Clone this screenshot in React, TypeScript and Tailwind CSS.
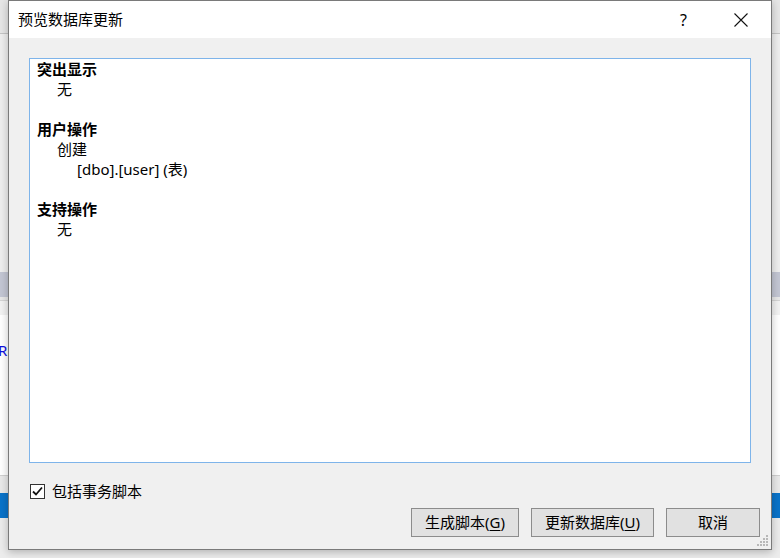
const font = {
  fontFamily: '"Noto Sans", "Noto Sans CJK SC", sans-serif',
};

function Grip() {
  const dots = [
    [9, 0],
    [6, 3],
    [9, 3],
    [3, 6],
    [6, 6],
    [9, 6],
    [0, 9],
    [3, 9],
    [6, 9],
    [9, 9],
  ];
  return (
    <svg width="12" height="12" viewBox="0 0 12 12" className="absolute right-[2px] bottom-[2px]">
      {dots.map(([x, y]) => (
        <rect key={`${x}-${y}`} x={x} y={y} width="2" height="2" fill="#b8b8b8" />
      ))}
    </svg>
  );
}

function Button({ label, hotkey }: { label: string; hotkey?: string }) {
  return (
    <button
      type="button"
      className="flex h-[29px] w-full items-center justify-center border border-[#8c8c8c] bg-[#e1e1e1] text-[15px] text-black"
    >
      {label}
      {hotkey && (
        <>
          (<span className="underline underline-offset-2">{hotkey}</span>)
        </>
      )}
    </button>
  );
}

const lines: { text: string; indent: number; bold?: boolean }[] = [
  { text: "突出显示", indent: 0, bold: true },
  { text: "无", indent: 1 },
  { text: "", indent: 0 },
  { text: "用户操作", indent: 0, bold: true },
  { text: "创建", indent: 1 },
  { text: "[dbo].[user] (表)", indent: 2 },
  { text: "", indent: 0 },
  { text: "支持操作", indent: 0, bold: true },
  { text: "无", indent: 1 },
];

export default function App() {
  return (
    <div className="relative h-[558px] w-[780px] overflow-hidden bg-[#ececec]" style={font}>
      {/* app behind the dialog */}
      <div className="flex h-full flex-col">
        <div className="h-[34px] border-b border-[#c4c4c4] bg-[#e6e6e6]" />
        <div className="h-[238px] bg-[#eeeeee]" />
        <div className="h-[25px] bg-[#c3c6d3]" />
        <div className="h-[3px] bg-[#e8e8e8]" />
        <div className="h-[15px] border-t border-[#d4d4d4] bg-[#f2f2f2]" />
        <div className="flex h-[160px] items-start bg-white pt-[24px] text-[15px] text-[#1010e0]">
          <span className="-ml-[2px]">R'</span>
          <span className="ml-auto mr-[-2px] mt-[150px] text-black">Q</span>
        </div>
        <div className="h-[18px] border-t border-[#d0d0d0] bg-[#e9e9e9]" />
        <div className="h-[25px] bg-[#0a73c9]" />
        <div className="flex-1 bg-[#ececec]" />
      </div>

      {/* dialog */}
      <div className="absolute left-[8px] top-0 flex h-[550px] w-[764px] flex-col border border-[#7a7a7a] bg-[#f0f0f0] shadow-[0_2px_8px_rgba(0,0,0,0.25)]">
        <div className="flex h-[37px] shrink-0 items-center bg-white pl-[9px] text-[15px] text-black">
          <span>预览数据库更新</span>
          <span className="ml-auto mr-[47px] text-[16px]">?</span>
          <svg width="14" height="14" viewBox="0 0 14 14" className="mr-[23px]">
            <path d="M0.5 0.5 L13.5 13.5 M13.5 0.5 L0.5 13.5" stroke="#111" strokeWidth="1.1" fill="none" />
          </svg>
        </div>

        <div className="relative flex flex-1 flex-col px-[20px] pt-[20px] pb-[12px]">
          <div className="h-[405px] border border-[#7eb4ea] bg-white pl-[7px] text-[15px] leading-[20px] text-black">
            {lines.map((l, i) => (
              <div
                key={i}
                className={`h-[20px] ${l.bold ? "font-bold" : ""} ${
                  l.indent === 1 ? "pl-[20px]" : l.indent === 2 ? "pl-[40px]" : ""
                }`}
              >
                {l.text}
              </div>
            ))}
          </div>

          <label className="mt-[21px] ml-[1px] flex h-[15px] items-center gap-[7px] text-[15px] text-black">
            <span className="flex h-[15px] w-[15px] items-center justify-center border border-[#333] bg-white">
              <svg width="11" height="11" viewBox="0 0 11 11">
                <path d="M1 5.5 L4 8.5 L10 1.5" stroke="#111" strokeWidth="1.8" fill="none" />
              </svg>
            </span>
            包括事务脚本
          </label>

          <div className="mt-[9px] mr-[-9px] flex justify-end gap-[12px]">
            <div className="w-[108px]">
              <Button label="生成脚本" hotkey="G" />
            </div>
            <div className="w-[123px]">
              <Button label="更新数据库" hotkey="U" />
            </div>
            <div className="w-[94px]">
              <Button label="取消" />
            </div>
          </div>
          <Grip />
        </div>
      </div>
    </div>
  );
}
